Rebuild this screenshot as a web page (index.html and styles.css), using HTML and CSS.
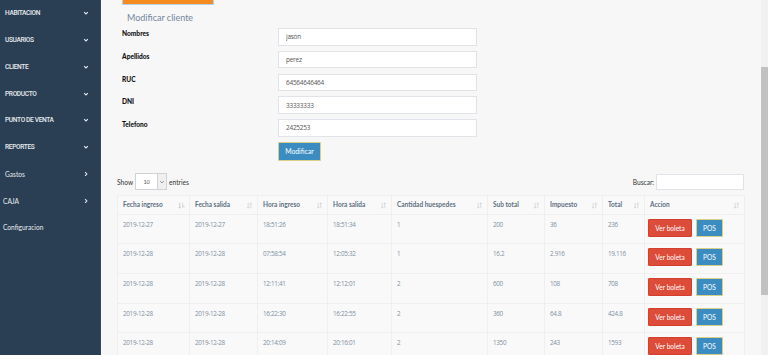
FILE: index.html
```html
<!DOCTYPE html>
<html lang="es">
<head>
<meta charset="utf-8">
<title>Modificar cliente</title>
<link rel="stylesheet" href="styles.css">
</head>
<body>
<div class="app">
  <nav class="sidebar">
    <ul class="menu">
      <li class="item caps"><span>HABITACION</span><svg class="chev" viewBox="0 0 8 8"><path d="M1.5 2.8 4 5.2 6.5 2.8"/></svg></li>
      <li class="item caps"><span>USUARIOS</span><svg class="chev" viewBox="0 0 8 8"><path d="M1.5 2.8 4 5.2 6.5 2.8"/></svg></li>
      <li class="item caps"><span>CLIENTE</span><svg class="chev" viewBox="0 0 8 8"><path d="M1.5 2.8 4 5.2 6.5 2.8"/></svg></li>
      <li class="item caps"><span>PRODUCTO</span><svg class="chev" viewBox="0 0 8 8"><path d="M1.5 2.8 4 5.2 6.5 2.8"/></svg></li>
      <li class="item caps"><span>PUNTO DE VENTA</span><svg class="chev" viewBox="0 0 8 8"><path d="M1.5 2.8 4 5.2 6.5 2.8"/></svg></li>
      <li class="item caps"><span>REPORTES</span><svg class="chev" viewBox="0 0 8 8"><path d="M1.5 2.8 4 5.2 6.5 2.8"/></svg></li>
      <li class="item"><span>Gastos</span><svg class="chev" viewBox="0 0 8 8"><path d="M2.8 1.5 5.2 4 2.8 6.5"/></svg></li>
      <li class="item tight"><span>CAJA</span><svg class="chev" viewBox="0 0 8 8"><path d="M2.8 1.5 5.2 4 2.8 6.5"/></svg></li>
      <li class="item tight"><span>Configuracion</span></li>
    </ul>
  </nav>

  <main class="main">
    <div class="topbtn"></div>
    <h2 class="title">Modificar cliente</h2>

    <form class="form">
      <div class="frow"><label class="flabel">Nombres</label><input class="finput" type="text" value="jason"></div>
      <div class="frow"><label class="flabel">Apellidos</label><input class="finput" type="text" value="perez"></div>
      <div class="frow"><label class="flabel">RUC</label><input class="finput" type="text" value="64564646464"></div>
      <div class="frow"><label class="flabel">DNI</label><input class="finput" type="text" value="33333333"></div>
      <div class="frow"><label class="flabel">Telefono</label><input class="finput" type="text" value="2425253"></div>
      <div class="frow"><span class="flabel"></span><button class="btn-blue" type="button">Modificar</button></div>
    </form>

    <div class="dt-top">
      <div class="dt-len">Show <span class="sel"><span class="selval">10</span><span class="selbtn"><svg viewBox="0 0 8 8"><path d="M1.5 2.8 4 5.2 6.5 2.8"/></svg></span></span> entries</div>
      <div class="dt-search">Buscar: <input class="sinput" type="text"></div>
    </div>

    <table class="dt">
      <colgroup>
        <col style="width:72px"><col style="width:68px"><col style="width:70px"><col style="width:64px"><col style="width:96px"><col style="width:57px"><col style="width:58px"><col style="width:42px"><col style="width:100px">
      </colgroup>
      <thead>
        <tr>
          <th><span>Fecha ingreso</span><svg class="sort on" viewBox="0 0 8 8"><path d="M2 1v6M0.8 5.8 2 7 3.2 5.8M4.5 1.5h1.2M4.5 3.5h2M4.5 5.5h3"/></svg></th>
          <th><span>Fecha salida</span><svg class="sort" viewBox="0 0 8 8"><path d="M2.5 1v6M1.2 5.7 2.5 7 3.8 5.7M5.5 7V1M4.2 2.3 5.5 1 6.8 2.3"/></svg></th>
          <th><span>Hora ingreso</span><svg class="sort" viewBox="0 0 8 8"><path d="M2.5 1v6M1.2 5.7 2.5 7 3.8 5.7M5.5 7V1M4.2 2.3 5.5 1 6.8 2.3"/></svg></th>
          <th><span>Hora salida</span><svg class="sort" viewBox="0 0 8 8"><path d="M2.5 1v6M1.2 5.7 2.5 7 3.8 5.7M5.5 7V1M4.2 2.3 5.5 1 6.8 2.3"/></svg></th>
          <th><span>Cantidad huespedes</span><svg class="sort" viewBox="0 0 8 8"><path d="M2.5 1v6M1.2 5.7 2.5 7 3.8 5.7M5.5 7V1M4.2 2.3 5.5 1 6.8 2.3"/></svg></th>
          <th><span>Sub total</span><svg class="sort" viewBox="0 0 8 8"><path d="M2.5 1v6M1.2 5.7 2.5 7 3.8 5.7M5.5 7V1M4.2 2.3 5.5 1 6.8 2.3"/></svg></th>
          <th><span>Impuesto</span><svg class="sort" viewBox="0 0 8 8"><path d="M2.5 1v6M1.2 5.7 2.5 7 3.8 5.7M5.5 7V1M4.2 2.3 5.5 1 6.8 2.3"/></svg></th>
          <th><span>Total</span><svg class="sort" viewBox="0 0 8 8"><path d="M2.5 1v6M1.2 5.7 2.5 7 3.8 5.7M5.5 7V1M4.2 2.3 5.5 1 6.8 2.3"/></svg></th>
          <th><span>Accion</span><svg class="sort" viewBox="0 0 8 8"><path d="M2.5 1v6M1.2 5.7 2.5 7 3.8 5.7M5.5 7V1M4.2 2.3 5.5 1 6.8 2.3"/></svg></th>
        </tr>
      </thead>
      <tbody>
        <tr><td>2019-12-27</td><td>2019-12-27</td><td>18:51:26</td><td>18:51:34</td><td>1</td><td>200</td><td>36</td><td>236</td><td><span class="acts"><button class="btn-red" type="button">Ver boleta</button><button class="btn-pos" type="button">POS</button></span></td></tr>
        <tr><td>2019-12-28</td><td>2019-12-28</td><td>07:58:54</td><td>12:05:32</td><td>1</td><td>16.2</td><td>2.916</td><td>19.116</td><td><span class="acts"><button class="btn-red" type="button">Ver boleta</button><button class="btn-pos" type="button">POS</button></span></td></tr>
        <tr><td>2019-12-28</td><td>2019-12-28</td><td>12:11:41</td><td>12:12:01</td><td>2</td><td>600</td><td>108</td><td>708</td><td><span class="acts"><button class="btn-red" type="button">Ver boleta</button><button class="btn-pos" type="button">POS</button></span></td></tr>
        <tr><td>2019-12-28</td><td>2019-12-28</td><td>16:22:30</td><td>16:22:55</td><td>2</td><td>360</td><td>64.8</td><td>424.8</td><td><span class="acts"><button class="btn-red" type="button">Ver boleta</button><button class="btn-pos" type="button">POS</button></span></td></tr>
        <tr><td>2019-12-28</td><td>2019-12-28</td><td>20:14:09</td><td>20:16:01</td><td>2</td><td>1350</td><td>243</td><td>1593</td><td><span class="acts"><button class="btn-red" type="button">Ver boleta</button><button class="btn-pos" type="button">POS</button></span></td></tr>
      </tbody>
    </table>
  </main>

  <div class="scrollbar"><div class="thumb"></div></div>
</div>
</body>
</html>
```

FILE: styles.css
```css
* { box-sizing: border-box; }
html, body { margin: 0; padding: 0; height: 100%; overflow: hidden; }
body {
  font-family: Lato, "Open Sans", "Liberation Sans", sans-serif;
  background: #f7f7f7;
  color: #73879c;
}
.app { display: flex; height: 355px; overflow: hidden; }

/* Sidebar */
.sidebar {
  width: 101px;
  flex: 0 0 101px;
  background: #2a3f54;
  border-right: 1px solid #34495e;
}
.menu { list-style: none; margin: 0; padding: 0; }
.item {
  height: 26.75px;
  display: flex;
  align-items: center;
  justify-content: space-between;
  padding: 0 11px 0 5px;
  color: #e8ecf0;
  font-size: 6.6px;
}
.item.caps { font-family: Roboto, "Liberation Sans", sans-serif; font-weight: 500; font-size: 6.6px; letter-spacing: -0.35px; }
.item.tight { padding-left: 3px; }
.chev { width: 6px; height: 6px; fill: none; stroke: #e8ecf0; stroke-width: 1.4; }

/* Main */
.main {
  flex: 1;
  padding: 0 17px 0 16px;
  min-width: 0;
}
.topbtn {
  width: 92px;
  height: 5px;
  margin-left: 5px;
  background: #f68b1f;
  border: 1px solid #b7d2e6;
  border-top: 0;
}
.title {
  margin: 7px 0 0 10px;
  font-size: 9px;
  font-weight: 400;
  color: #73879c;
  line-height: 12px;
}
.form { margin-top: 4px; }
.frow { display: flex; align-items: flex-start; height: 22.8px; }
.flabel {
  width: 161px;
  padding-left: 5px;
  padding-top: 1px;
  font-size: 6.6px;
  font-weight: 900;
  color: #111;
  line-height: 8px;
}
.finput {
  width: 199px;
  height: 17.5px;
  border: 1px solid #e0e3e7;
  background: #fff;
  padding: 0 7px;
  font-family: "Open Sans", Lato, sans-serif;
  font-size: 6.4px;
  letter-spacing: -0.2px;
  color: #555;
  outline: none;
}
.btn-blue {
  width: 43px;
  height: 19px;
  margin-top: 0;
  background: #3b8dc1;
  border: 1px solid #d9cf86;
  border-radius: 1px;
  color: #fff;
  font-family: inherit;
  font-size: 6.8px;
  padding: 0;
}

/* Datatable controls */
.dt-top {
  display: flex;
  justify-content: space-between;
  align-items: center;
  margin-top: 8px;
  height: 18px;
  font-size: 6.6px;
  color: #333;
}
.dt-len { display: flex; align-items: center; gap: 2px; }
.sel {
  display: inline-flex;
  width: 32px;
  height: 17px;
  border: 1px solid #cfd3d7;
  background: #fff;
  align-items: stretch;
}
.selval { flex: 1; display: flex; align-items: center; justify-content: center; font-size: 5.5px; color: #555; }
.selbtn { width: 9px; border-left: 1px solid #cfd3d7; background: #f0f0f0; display: flex; align-items: center; justify-content: center; }
.selbtn svg { width: 6px; height: 6px; fill: none; stroke: #666; stroke-width: 0.9; }
.dt-search { display: flex; align-items: center; gap: 2px; }
.sinput { width: 88px; height: 16px; border: 1px solid #e0e3e7; background: #fff; outline: none; }

/* Table */
.dt {
  margin-top: 4px;
  width: 627px;
  table-layout: fixed;
  border-collapse: collapse;
  background: #f9f9f9;
  font-size: 6.5px;
}
.dt th {
  height: 19px;
  text-align: left;
  font-weight: 700;
  color: #5d6f82;
  padding: 0 5px;
  border: 1px solid #efefef;
  position: relative;
  white-space: nowrap;
}
.dt th span { display: block; }
.sort {
  position: absolute;
  right: 4px;
  top: 6px;
  width: 7px;
  height: 7px;
  fill: none;
  stroke: #cfd4d9;
  stroke-width: 0.9;
}
.sort.on { stroke: #b8c0c8; }
.dt td {
  height: 29.6px;
  vertical-align: top;
  padding: 6px 5px 0;
  color: #7d8fa3;
  border: 1px solid #efefef;
  font-family: "Open Sans", Lato, sans-serif;
  font-size: 6.3px;
  letter-spacing: -0.3px;
  line-height: 8px;
  white-space: nowrap;
}
.dt td:last-child { padding: 4px 0 0 3px; letter-spacing: 0; font-family: Lato, "Open Sans", sans-serif; }
.acts { display: flex; gap: 4px; }
.btn-red {
  width: 44px;
  height: 18px;
  background: #dd4b39;
  border: 1px solid #d43f2d;
  border-radius: 1px;
  color: #fff;
  font-family: inherit;
  font-size: 6.6px;
  padding: 0;
}
.btn-pos {
  width: 27px;
  height: 18px;
  background: #3b8dc1;
  border: 1px solid #d9cf86;
  border-radius: 1px;
  color: #fff;
  font-family: inherit;
  font-size: 6.6px;
  padding: 0;
}

/* Fake scrollbar */
.scrollbar {
  width: 7px;
  flex: 0 0 7px;
  background: #f1f1f1;
  padding-top: 67px;
}
.thumb { height: 228px; background: #c1c1c1; }
```
